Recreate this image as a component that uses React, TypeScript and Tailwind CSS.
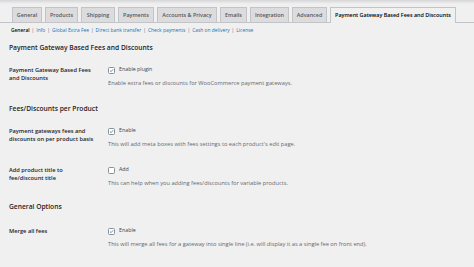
import React from "react";

const tabs: [string, string][] = [
  ["General", "w-[30px]"],
  ["Products", "w-[33px]"],
  ["Shipping", "w-[34px]"],
  ["Payments", "w-[36px]"],
  ["Accounts & Privacy", "w-[60px]"],
  ["Emails", "w-[27px]"],
  ["Integration", "w-[39px]"],
  ["Advanced", "w-[35px]"],
];

const subLinks = [
  "Info",
  "Global Extra Fee",
  "Direct bank transfer",
  "Check payments",
  "Cash on delivery",
  "License",
];

const Check = ({ checked }: { checked: boolean }) => (
  <span className="w-[7px] h-[7px] rounded-[1.5px] border border-[#8c8f94] bg-white flex items-center justify-center shrink-0">
    {checked && (
      <svg viewBox="0 0 10 10" className="w-[7px] h-[7px]">
        <path d="M2 5.2 L4.2 7.3 L8.2 2.6" fill="none" stroke="#2271b1" strokeWidth="1.5" />
      </svg>
    )}
  </span>
);

const Row = ({
  label,
  option,
  checked,
  desc,
}: {
  label: React.ReactNode;
  option: string;
  checked: boolean;
  desc: string;
}) => (
  <div className="flex">
    <div className="w-[99px] shrink-0 text-[5.7px] leading-[8px] font-semibold text-[#1d2327]">{label}</div>
    <div className="flex flex-col">
      <div className="flex items-center gap-[4px] h-[8px]">
        <Check checked={checked} />
        <span className="text-[5.3px] text-[#3c434a]">{option}</span>
      </div>
      <p className="mt-[5px] text-[5.7px] leading-[8px] text-[#646970] whitespace-nowrap">{desc}</p>
    </div>
  </div>
);

const Heading = ({ children }: { children: React.ReactNode }) => (
  <h2 className="text-[6.7px] leading-[10px] font-semibold text-[#1d2327]">{children}</h2>
);

export default function App() {
  return (
    <div
      className="w-[474px] h-[267px] bg-[#f0f0f1] overflow-hidden relative"
      style={{ fontFamily: '"Open Sans", "Noto Sans", sans-serif' }}
    >
      <div className="h-[4px] bg-gradient-to-b from-[#d6d6d8] to-[#f0f0f1]" />
      <div className="flex items-end gap-[3px] pl-[12px] pt-[3px] border-b border-[#c3c4c7]">
        {tabs.map(([t, w]) => (
          <div
            key={t}
            className={`${w} h-[15px] flex items-center justify-center whitespace-nowrap border border-b-0 border-[#c3c4c7] bg-[#dcdcde] text-[5.4px] font-semibold text-[#50575e]`}
          >
            {t}
          </div>
        ))}
        <div className="w-[126px] h-[16px] -mb-px flex items-center justify-center whitespace-nowrap border border-b-0 border-[#c3c4c7] bg-[#f0f0f1] text-[5.4px] font-semibold text-[#000]">
          Payment Gateway Based Fees and Discounts
        </div>
      </div>
      <div className="flex items-center pl-[11px] mt-[3px] h-[9px] text-[4.9px] text-[#646970] whitespace-nowrap">
        <span className="font-semibold text-[#000]">General</span>
        {subLinks.map((l) => (
          <span key={l} className="flex items-center">
            <span className="mx-[2px]">|</span>
            <span className="text-[#2271b1]">{l}</span>
          </span>
        ))}
      </div>

      <div className="pl-[9px] mt-[8px]">
        <Heading>Payment Gateway Based Fees and Discounts</Heading>
        <div className="mt-[13px]">
          <Row
            label={<>Payment Gateway Based Fees<br />and Discounts</>}
            option="Enable plugin"
            checked
            desc="Enable extra fees or discounts for WooCommerce payment gateways."
          />
        </div>
        <div className="mt-[17px]">
          <Heading>Fees/Discounts per Product</Heading>
        </div>
        <div className="mt-[13px]">
          <Row
            label={<>Payment gateways fees and<br />discounts on per product basis</>}
            option="Enable"
            checked
            desc="This will add meta boxes with fees settings to each product's edit page."
          />
        </div>
        <div className="mt-[18px]">
          <Row
            label={<>Add product title to<br />fee/discount title</>}
            option="Add"
            checked={false}
            desc="This can help when you adding fees/discounts for variable products."
          />
        </div>
        <div className="mt-[15px]">
          <Heading>General Options</Heading>
        </div>
        <div className="mt-[15px]">
          <Row
            label="Merge all fees"
            option="Enable"
            checked
            desc="This will merge all fees for a gateway into single line (i.e. will display it as a single fee on front end)."
          />
        </div>
      </div>
    </div>
  );
}
